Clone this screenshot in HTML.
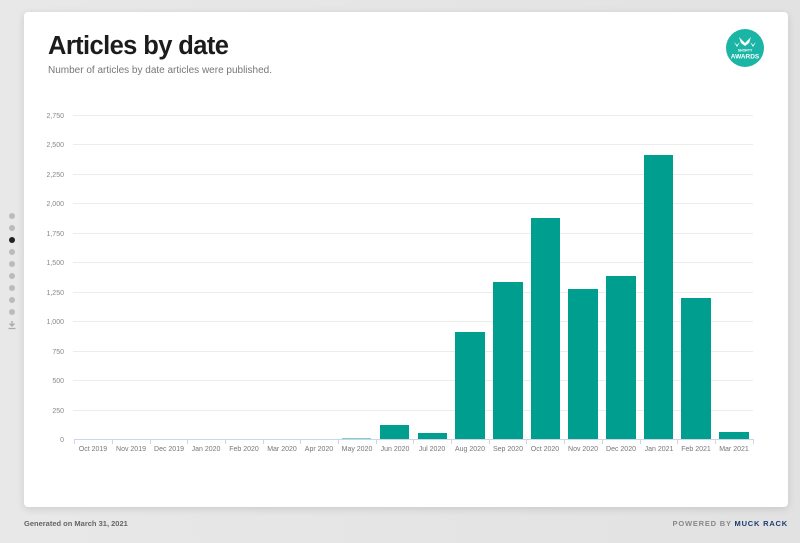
<!DOCTYPE html>
<html><head><meta charset="utf-8"><style>
html,body{margin:0;padding:0;width:800px;height:543px;overflow:hidden;font-family:"Liberation Sans",sans-serif;}
body{background:linear-gradient(90deg,#e8e8e8,#e2e2e2);position:relative;}
.card{position:absolute;left:24px;top:12px;width:764px;height:495px;background:#fff;border-radius:4px;box-shadow:0 2px 8px rgba(0,0,0,.12);}
h1{position:absolute;left:24px;top:20px;margin:0;font-size:25.5px;font-weight:bold;color:#1c1c1c;letter-spacing:-0.6px;}
.sub{position:absolute;left:24px;top:53px;font-size:10px;color:#777;}
.gen{position:absolute;left:24px;top:519px;font-size:7.5px;color:#666;font-weight:bold;}
.pw{position:absolute;right:12px;top:519px;font-size:7.5px;color:#888;font-weight:bold;letter-spacing:0.8px;white-space:nowrap;}
.pw b{color:#1b3b6f;}
.dot{position:absolute;left:9px;width:6px;height:6px;border-radius:50%;background:#bbb;}
</style></head><body>
<div class="card">
<h1>Articles by date</h1>
<div class="sub">Number of articles by date articles were published.</div>
<svg style="position:absolute;left:701px;top:16px" width="40" height="40" viewBox="0 0 40 40">
<circle cx="20" cy="20" r="19" fill="#1bb5a6"/>
<path d="M14 9 L20 15 L26 9 L24 15 L20 18 L16 15 Z" fill="#fff"/>
<path d="M9 14 L12 17 L15 14 L12 19Z M25 14 L28 17 L31 14 L28 19Z" fill="#fff"/>
<text x="20" y="23.5" font-size="3.5" fill="#fff" text-anchor="middle" font-family="Liberation Sans" font-weight="bold">SHORTY</text>
<text x="20" y="30.5" font-size="6.5" fill="#fff" text-anchor="middle" font-family="Liberation Sans" font-weight="bold">AWARDS</text>
</svg>
</div>
<svg style="position:absolute;left:0;top:0" width="800" height="543">
<g stroke="#ececec" stroke-width="1">
<line x1="73" x2="753" y1="115.5" y2="115.5"/><line x1="73" x2="753" y1="144.5" y2="144.5"/><line x1="73" x2="753" y1="174.5" y2="174.5"/><line x1="73" x2="753" y1="203.5" y2="203.5"/><line x1="73" x2="753" y1="233.5" y2="233.5"/><line x1="73" x2="753" y1="262.5" y2="262.5"/><line x1="73" x2="753" y1="292.5" y2="292.5"/><line x1="73" x2="753" y1="321.5" y2="321.5"/><line x1="73" x2="753" y1="351.5" y2="351.5"/><line x1="73" x2="753" y1="380.5" y2="380.5"/><line x1="73" x2="753" y1="410.5" y2="410.5"/>
</g>
<g font-size="7" fill="#888" text-anchor="end" font-family="Liberation Sans">
<text x="64" y="118">2,750</text><text x="64" y="147">2,500</text><text x="64" y="177">2,250</text><text x="64" y="206">2,000</text><text x="64" y="236">1,750</text><text x="64" y="265">1,500</text><text x="64" y="295">1,250</text><text x="64" y="324">1,000</text><text x="64" y="354">750</text><text x="64" y="383">500</text><text x="64" y="413">250</text><text x="64" y="442">0</text>
</g>
<g fill="#009e8f">
<rect x="342" y="438" width="29" height="1" fill="#7fd0c7"/>
<rect x="380" y="425" width="29" height="14"/>
<rect x="418" y="433" width="29" height="6"/>
<rect x="455" y="332" width="30" height="107"/>
<rect x="493" y="282" width="30" height="157"/>
<rect x="531" y="218" width="29" height="221"/>
<rect x="568" y="289" width="30" height="150"/>
<rect x="606" y="276" width="30" height="163"/>
<rect x="644" y="155" width="29" height="284"/>
<rect x="681" y="298" width="30" height="141"/>
<rect x="719" y="432" width="30" height="7"/>
</g>
<line x1="74" x2="753" y1="439.5" y2="439.5" stroke="#ccd6eb"/>
<g stroke="#ccd6eb">
<line x1="74.5" x2="74.5" y1="439" y2="444"/><line x1="112.5" x2="112.5" y1="439" y2="444"/><line x1="150.5" x2="150.5" y1="439" y2="444"/><line x1="187.5" x2="187.5" y1="439" y2="444"/><line x1="225.5" x2="225.5" y1="439" y2="444"/><line x1="263.5" x2="263.5" y1="439" y2="444"/><line x1="300.5" x2="300.5" y1="439" y2="444"/><line x1="338.5" x2="338.5" y1="439" y2="444"/><line x1="376.5" x2="376.5" y1="439" y2="444"/><line x1="413.5" x2="413.5" y1="439" y2="444"/><line x1="451.5" x2="451.5" y1="439" y2="444"/><line x1="489.5" x2="489.5" y1="439" y2="444"/><line x1="526.5" x2="526.5" y1="439" y2="444"/><line x1="564.5" x2="564.5" y1="439" y2="444"/><line x1="602.5" x2="602.5" y1="439" y2="444"/><line x1="640.5" x2="640.5" y1="439" y2="444"/><line x1="677.5" x2="677.5" y1="439" y2="444"/><line x1="715.5" x2="715.5" y1="439" y2="444"/><line x1="753.5" x2="753.5" y1="439" y2="444"/>
</g>
<g font-size="7" fill="#777" text-anchor="middle" font-family="Liberation Sans">
<text x="93" y="451">Oct 2019</text><text x="131" y="451">Nov 2019</text><text x="169" y="451">Dec 2019</text><text x="206" y="451">Jan 2020</text><text x="244" y="451">Feb 2020</text><text x="282" y="451">Mar 2020</text><text x="319" y="451">Apr 2020</text><text x="357" y="451">May 2020</text><text x="395" y="451">Jun 2020</text><text x="432" y="451">Jul 2020</text><text x="470" y="451">Aug 2020</text><text x="508" y="451">Sep 2020</text><text x="545" y="451">Oct 2020</text><text x="583" y="451">Nov 2020</text><text x="621" y="451">Dec 2020</text><text x="659" y="451">Jan 2021</text><text x="696" y="451">Feb 2021</text><text x="734" y="451">Mar 2021</text>
</g>
<path d="M12 321v5 M9.5 323.5l2.5 2.5 2.5-2.5 M8.5 328.5h7" stroke="#aaa" stroke-width="1.3" fill="none"/>
</svg>
<div class="dot" style="top:213px"></div><div class="dot" style="top:225px"></div><div class="dot" style="top:237px;background:#222"></div><div class="dot" style="top:249px"></div><div class="dot" style="top:261px"></div><div class="dot" style="top:273px"></div><div class="dot" style="top:285px"></div><div class="dot" style="top:297px"></div><div class="dot" style="top:309px"></div>
<div class="gen">Generated on March 31, 2021</div>
<div class="pw">POWERED BY <b>MUCK RACK</b></div>
</body></html>
